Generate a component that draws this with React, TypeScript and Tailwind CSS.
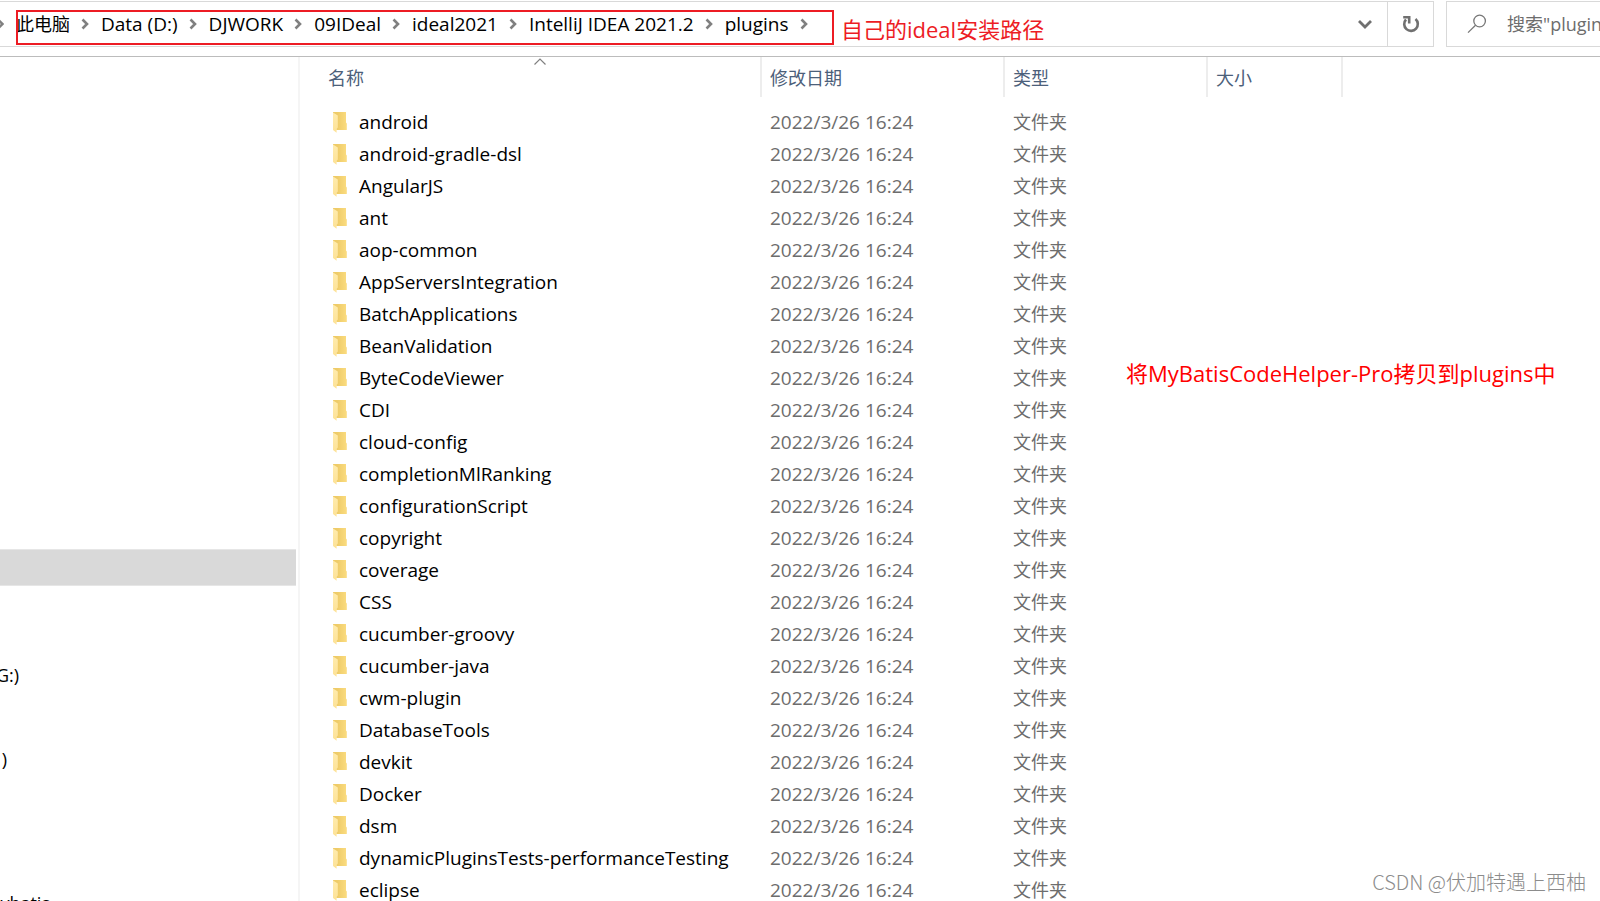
import { Fragment } from "react";

const folders = [
  "android",
  "android-gradle-dsl",
  "AngularJS",
  "ant",
  "aop-common",
  "AppServersIntegration",
  "BatchApplications",
  "BeanValidation",
  "ByteCodeViewer",
  "CDI",
  "cloud-config",
  "completionMlRanking",
  "configurationScript",
  "copyright",
  "coverage",
  "CSS",
  "cucumber-groovy",
  "cucumber-java",
  "cwm-plugin",
  "DatabaseTools",
  "devkit",
  "Docker",
  "dsm",
  "dynamicPluginsTests-performanceTesting",
  "eclipse",
];

const crumbs = [
  "Data (D:)",
  "DJWORK",
  "09IDeal",
  "ideal2021",
  "IntelliJ IDEA 2021.2",
  "plugins",
];

const Chevron = () => (
  <svg className="w-2 h-3 ml-[11px] mr-3 shrink-0" viewBox="0 0 8 12" fill="none" stroke="#808080" strokeWidth="2.6">
    <path d="M1.5 1.5 6 6 1.5 10.5" />
  </svg>
);

const FolderIcon = () => (
  <svg className="w-4 h-6 shrink-0" viewBox="0 0 16 24">
    <defs>
      <linearGradient id="folder-back" x1="0" y1="0" x2="1" y2="0">
        <stop offset="0.3" stopColor="#eecb68" />
        <stop offset="1" stopColor="#fbdc80" />
      </linearGradient>
      <linearGradient id="folder-flap" x1="0" y1="0" x2="0" y2="1">
        <stop offset="0" stopColor="#ffebad" />
        <stop offset="1" stopColor="#fde296" />
      </linearGradient>
    </defs>
    <path d="M1 2h13v10.500l.8 1V20H5L1 18z" fill="url(#folder-back)" />
    <path d="M1 2.500l4.800 3V17.500L4.600 19v3.800L1 20z" fill="url(#folder-flap)" />
  </svg>
);

const AddressBar = () => (
  <div className="flex h-[57px] border-b border-[#bcbcbc] pt-px">
    <div className="relative flex flex-1 h-[46px] border-y border-r border-[#d9d9d9]">
      <nav className="flex flex-1 items-center h-11 text-black text-[19px] whitespace-nowrap">
        <svg className="w-1 h-3 mr-3 shrink-0" viewBox="0 0 4 12" fill="none" stroke="#808080" strokeWidth="2.6">
          <path d="M-2 1.5 2.5 6-2 10.5" />
        </svg>
        <button className="text-[18px]">此电脑</button>
        <Chevron />
        {crumbs.map((crumb) => (
          <Fragment key={crumb}>
            <button>{crumb}</button>
            <Chevron />
          </Fragment>
        ))}
      </nav>
      <button aria-label="路径" className="flex items-center justify-center w-11">
        <svg className="w-4 h-4" viewBox="0 0 16 16" fill="none" stroke="#707070" strokeWidth="2.8">
          <path d="M2 5l6 6 6-6" />
        </svg>
      </button>
      <button aria-label="刷新" className="flex items-center justify-center w-[46px] border-l border-[#d9d9d9]">
        <svg className="w-5 h-5" viewBox="0 0 20 20" fill="none" stroke="#707070" strokeWidth="2.6">
          <path d="M5 5.5A6.8 6.8 0 1 0 14.5 5" />
          <path d="M2.2 3.2h6v6.3" />
        </svg>
      </button>
      <div className="absolute left-4 top-2 w-[818px] h-[35px] border-2 border-[#ed1c24] pointer-events-none" />
      <span className="absolute left-[841px] top-[11px] text-[22px] leading-8 text-[#ed1c24] whitespace-nowrap">
        自己的ideal安装路径
      </span>
    </div>
    <label className="flex items-center w-[154px] h-[46px] ml-3 border-l border-y border-[#d9d9d9]">
      <svg className="w-5 h-5 mx-5 shrink-0" viewBox="0 0 20 20" fill="none" stroke="#777777" strokeWidth="1.3">
        <circle cx="12.6" cy="7" r="5.8" />
        <path d="M8.5 11.2 1 18.6" />
      </svg>
      <input
        type="text"
        aria-label="搜索"
        placeholder={'搜索"plugins"'}
        className="min-w-0 flex-1 text-[18px] outline-none placeholder:text-[#6d6d6d]"
      />
    </label>
  </div>
);

// tree is scrolled sideways, only the tail of each label stays visible
const TreeLabel = ({ text, className }: { text: string; className: string }) => (
  <div className={`flex items-center justify-end h-9 shrink-0 overflow-hidden text-[18px] text-black ${className}`}>
    {text}
  </div>
);

const Sidebar = () => (
  <aside className="flex flex-col w-[300px] shrink-0 border-r-2 border-[#f5f5f5] overflow-hidden">
    <div className="h-[37px] w-[296px] shrink-0 mt-[492px] bg-[#d9d9d9] border-y border-[#e6e6e6]" />
    <TreeLabel text="G:)" className="w-[19px] mt-[71px]" />
    <TreeLabel text=")" className="w-[7px] mt-12" />
    <TreeLabel text="ybatis" className="w-[50px] mt-[108px]" />
  </aside>
);

const FileTable = () => (
  <div className="relative flex-1 min-w-0 overflow-hidden">
    <table className="w-full table-fixed border-collapse text-left whitespace-nowrap">
      <colgroup>
        <col className="w-[461px]" />
        <col className="w-[243px]" />
        <col className="w-[203px]" />
        <col className="w-[135px]" />
        <col />
      </colgroup>
      <thead>
        <tr className="h-10 text-[18px] text-[#4c607a]">
          <th className="relative font-normal p-0 pl-7 pt-0.5 border-r-2 border-[#ededed]">
            名称
            <svg className="absolute left-[234px] top-px w-3 h-2" viewBox="0 0 12 8" fill="none" stroke="#808080" strokeWidth="1.2">
              <path d="M.5 6.5 6 1l5.5 5.5" />
            </svg>
          </th>
          <th className="font-normal p-0 pl-2 pt-0.5 border-r-2 border-[#ededed]">修改日期</th>
          <th className="font-normal p-0 pl-2 pt-0.5 border-r-2 border-[#ededed]">类型</th>
          <th className="font-normal p-0 pl-2 pt-0.5 border-r-2 border-[#ededed]">大小</th>
          <th className="p-0" />
        </tr>
      </thead>
      <tbody>
        <tr className="h-[9px]">
          <td colSpan={5} className="p-0" />
        </tr>
        {folders.map((name) => (
          <tr key={name} className="h-8 text-[18px] leading-6 text-[#6d6d6d]">
            <td className="p-0 pl-8">
              <div className="flex items-center gap-[11px]">
                <FolderIcon />
                <span className="text-[19px] text-black">{name}</span>
              </div>
            </td>
            <td className="p-0 pl-[9px] text-[19px]">2022/3/26 16:24</td>
            <td className="p-0 pl-[9px]">文件夹</td>
            <td className="p-0" />
            <td className="p-0" />
          </tr>
        ))}
      </tbody>
    </table>
    <span className="absolute left-[826px] top-[300px] text-[22px] leading-8 text-[#ff0000] whitespace-nowrap">
      将MyBatisCodeHelper-Pro拷贝到plugins中
    </span>
  </div>
);

export default function App() {
  return (
    <div className="relative flex flex-col h-screen overflow-hidden bg-white font-['Open_Sans','Noto_Sans_CJK_SC',sans-serif]">
      <AddressBar />
      <div className="flex flex-1 min-h-0">
        <Sidebar />
        <FileTable />
      </div>
      <span className="absolute right-[14px] bottom-[5px] text-[20px] leading-7 font-light text-[#8c8c8c] font-['Noto_Sans_CJK_SC',sans-serif]">
        CSDN @伏加特遇上西柚
      </span>
    </div>
  );
}
